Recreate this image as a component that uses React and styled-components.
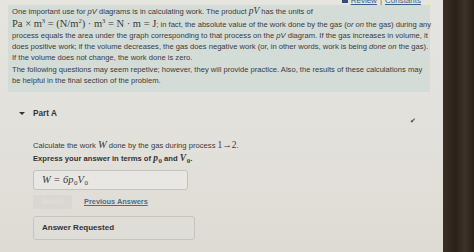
import styled, { createGlobalStyle } from "styled-components";

const Global = createGlobalStyle`
  html, body {
    margin: 0;
    padding: 0;
    background: #2d231b;
  }
  body {
    font-family: "Liberation Sans", Arial, sans-serif;
    color: #3a3a3a;
  }
`;

const App = () => {
  return (
    <>
      <Global />
      <Frame>
        <Screen>
          <TopLinks>
            <LinkIcon />
            <TopLink>Review</TopLink>
            <Sep>|</Sep>
            <TopLink>Constants</TopLink>
          </TopLinks>
          <InfoBox>
            <Para>
              <Line>
                One important use for <i>pV</i> diagrams is in calculating work. The product <M $it>pV</M> has the
                units of
              </Line>
              <Line $tall>
                <M $lg>
                  Pa × m<sup>3</sup> = (N/m<sup>2</sup>) · m<sup>3</sup> = N · m = J
                </M>
                ; in fact, the absolute value of the work done by the gas (<i>or on</i> the gas) during any
              </Line>
              <Line>
                process equals the area under the graph corresponding to that process on the <i>pV</i> diagram. If the
                gas increases in volume, it
              </Line>
              <Line>
                does positive work; if the volume decreases, the gas does negative work (or, in other words, work is
                being <i>done on</i> the gas).
              </Line>
              <Line>If the volume does not change, the work done is zero.</Line>
            </Para>
            <Para>
              <Line>
                The following questions may seem repetive; however, they will provide practice. Also, the results of
                these calculations may
              </Line>
              <Line>be helpful in the final section of the problem.</Line>
            </Para>
          </InfoBox>
          <PartHeader>
            <Caret />
            <PartTitle>Part A</PartTitle>
            <Check>✔</Check>
          </PartHeader>
          <PartBody>
            <Question>
              Calculate the work <M $it $lg>W</M> done by the gas during process <M>1→2</M>.
            </Question>
            <Instruction>
              Express your answer in terms of{" "}
              <M $it>
                p<Sub>0</Sub>
              </M>{" "}
              and{" "}
              <M $it>
                V<Sub>0</Sub>
              </M>
              .
            </Instruction>
            <AnswerBox>
              <M $it $lg>
                W = 6p<Sub>0</Sub>V<Sub>0</Sub>
              </M>
            </AnswerBox>
            <Actions>
              <SubmitButton disabled>Submit</SubmitButton>
              <PrevLink>Previous Answers</PrevLink>
            </Actions>
            <RequestedBox>Answer Requested</RequestedBox>
          </PartBody>
        </Screen>
        <Bezel />
      </Frame>
    </>
  );
};

const Frame = styled.div`
  display: flex;
  width: 474px;
  height: 252px;
  overflow: hidden;
`;

const Screen = styled.div`
  width: 443px;
  flex-shrink: 0;
  background: linear-gradient(180deg, #e6e4df 0%, #e2e0da 60%, #dedbd4 100%);
  position: relative;
  padding: 5px 13px 0 8px;
  box-sizing: border-box;
`;

const Bezel = styled.div`
  flex: 1;
  background: linear-gradient(90deg, #3a2f25 0%, #2b2119 40%, #3d3228 70%, #2a2019 100%);
`;

const TopLinks = styled.div`
  position: absolute;
  top: -4px;
  right: 22px;
  display: flex;
  align-items: center;
  gap: 3px;
  font-size: 8px;
  color: #3d5f86;
`;

const LinkIcon = styled.span`
  width: 6px;
  height: 5px;
  background: #2f4f78;
`;

const TopLink = styled.span`
  text-decoration: underline;
`;

const Sep = styled.span`
  color: #555;
`;

const InfoBox = styled.div`
  background: #d4dcd8;
  padding: 0.5px 4px 6px 4px;
  display: flex;
  flex-direction: column;
  gap: 1px;
`;

const Para = styled.div`
  display: flex;
  flex-direction: column;
`;

const Line = styled.div`
  font-size: 7.6px;
  line-height: ${(p) => (p.$tall ? "13px" : "11px")};
  height: ${(p) => (p.$tall ? "13px" : "11px")};
  white-space: nowrap;
  color: #3b3b3b;
`;

const M = styled.span`
  font-family: "Liberation Serif", "Times New Roman", serif;
  font-size: ${(p) => (p.$lg ? "10.5px" : "9.5px")};
  font-style: ${(p) => (p.$it ? "italic" : "normal")};
  color: #3a3a3a;
  sup {
    font-size: 6.5px;
    line-height: 0;
    font-style: normal;
  }
`;

const Sub = styled.span`
  display: inline-block;
  font-size: 7px;
  font-style: normal;
  line-height: 1;
  position: relative;
  top: 2px;
  margin-left: 0.5px;
`;

const PartHeader = styled.div`
  display: flex;
  align-items: center;
  margin-top: 13px;
  height: 18px;
  padding-left: 11px;
  position: relative;
`;

const Caret = styled.span`
  width: 0;
  height: 0;
  border-left: 3px solid transparent;
  border-right: 3px solid transparent;
  border-top: 3.5px solid #333;
  margin-right: 8px;
`;

const PartTitle = styled.span`
  font-size: 8.2px;
  font-weight: bold;
  color: #333;
`;

const Check = styled.span`
  position: absolute;
  right: 14px;
  top: 12px;
  font-size: 7px;
  color: #444;
`;

const PartBody = styled.div`
  padding: 16px 0 0 25px;
  display: flex;
  flex-direction: column;
  align-items: flex-start;
`;

const Question = styled.div`
  font-size: 7.65px;
  color: #3b3b3b;
  line-height: 12px;
  height: 12px;
`;

const Instruction = styled.div`
  font-size: 7.65px;
  font-weight: bold;
  color: #333;
  line-height: 12px;
  height: 12px;
  margin-top: 1px;
`;

const AnswerBox = styled.div`
  box-sizing: border-box;
  width: 155px;
  height: 20px;
  margin-top: 6px;
  border: 1px solid #c5c3bd;
  border-radius: 3px;
  background: #e9e7e3;
  display: flex;
  align-items: center;
  padding-left: 8px;
`;

const Actions = styled.div`
  display: flex;
  align-items: center;
  gap: 12px;
  margin-top: 5px;
`;

const SubmitButton = styled.button`
  width: 39px;
  height: 14px;
  border: none;
  border-radius: 2px;
  background: #d9d7d2;
  color: #e2e0dc;
  font-family: "Liberation Sans", Arial, sans-serif;
  font-size: 7px;
  padding: 0;
`;

const PrevLink = styled.span`
  font-size: 7.4px;
  font-weight: bold;
  color: #4c6f8e;
  text-decoration: underline;
`;

const RequestedBox = styled.div`
  box-sizing: border-box;
  width: 162px;
  height: 24px;
  margin-top: 7px;
  border: 1px solid #c7c4be;
  border-radius: 3px;
  background: #dfddd8;
  display: flex;
  align-items: center;
  padding-left: 8px;
  font-size: 8px;
  font-weight: bold;
  color: #333;
`;

export default App;
